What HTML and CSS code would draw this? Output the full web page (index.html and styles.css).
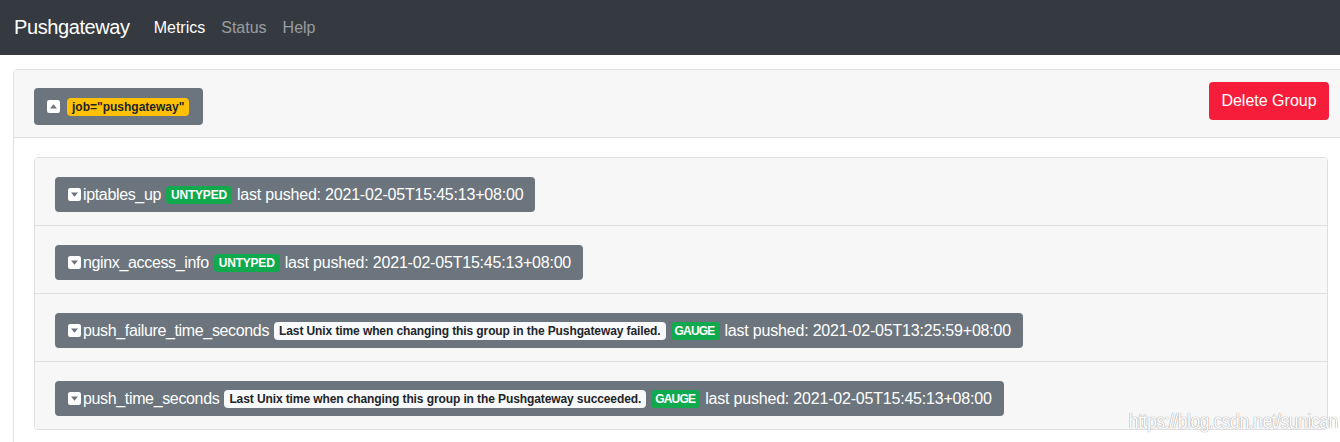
FILE: index.html
```html
<!DOCTYPE html>
<html lang="en">
<head>
<meta charset="utf-8">
<title>Pushgateway</title>
<link rel="stylesheet" href="styles.css">
</head>
<body>
<div class="page">
  <nav class="navbar">
    <span class="brand">Pushgateway</span>
    <a class="nav-link active">Metrics</a>
    <a class="nav-link">Status</a>
    <a class="nav-link">Help</a>
  </nav>

  <div class="group">
    <div class="group-header">
      <div class="group-badge">
        <svg class="icon" viewBox="0 0 13 13" width="13" height="13"><path fill="#fff" fill-rule="evenodd" d="M2.2 0h8.6A2.2 2.2 0 0 1 13 2.2v8.6A2.2 2.2 0 0 1 10.8 13H2.2A2.2 2.2 0 0 1 0 10.8V2.2A2.2 2.2 0 0 1 2.2 0zM3 8.6h7L6.5 4.2z"/></svg>
        <span class="badge badge-warning">job="pushgateway"</span>
      </div>
      <button class="btn-danger">Delete Group</button>
    </div>
    <div class="group-body">
      <div class="metrics">
        <div class="metric-row">
          <div class="bar">
            <svg class="icon" viewBox="0 0 13 13" width="13" height="13"><path fill="#fff" fill-rule="evenodd" d="M2.2 0h8.6A2.2 2.2 0 0 1 13 2.2v8.6A2.2 2.2 0 0 1 10.8 13H2.2A2.2 2.2 0 0 1 0 10.8V2.2A2.2 2.2 0 0 1 2.2 0zM3 4.4h7L6.5 8.8z"/></svg>
            <span class="name">iptables_up</span>
            <span class="badge badge-success">UNTYPED</span>
            <span class="pushed">last pushed: 2021-02-05T15:45:13+08:00</span>
          </div>
        </div>
        <div class="metric-row">
          <div class="bar">
            <svg class="icon" viewBox="0 0 13 13" width="13" height="13"><path fill="#fff" fill-rule="evenodd" d="M2.2 0h8.6A2.2 2.2 0 0 1 13 2.2v8.6A2.2 2.2 0 0 1 10.8 13H2.2A2.2 2.2 0 0 1 0 10.8V2.2A2.2 2.2 0 0 1 2.2 0zM3 4.4h7L6.5 8.8z"/></svg>
            <span class="name">nginx_access_info</span>
            <span class="badge badge-success">UNTYPED</span>
            <span class="pushed">last pushed: 2021-02-05T15:45:13+08:00</span>
          </div>
        </div>
        <div class="metric-row">
          <div class="bar">
            <svg class="icon" viewBox="0 0 13 13" width="13" height="13"><path fill="#fff" fill-rule="evenodd" d="M2.2 0h8.6A2.2 2.2 0 0 1 13 2.2v8.6A2.2 2.2 0 0 1 10.8 13H2.2A2.2 2.2 0 0 1 0 10.8V2.2A2.2 2.2 0 0 1 2.2 0zM3 4.4h7L6.5 8.8z"/></svg>
            <span class="name">push_failure_time_seconds</span>
            <span class="badge badge-light">Last Unix time when changing this group in the Pushgateway failed.</span>
            <span class="badge badge-success gauge">GAUGE</span>
            <span class="pushed">last pushed: 2021-02-05T13:25:59+08:00</span>
          </div>
        </div>
        <div class="metric-row">
          <div class="bar">
            <svg class="icon" viewBox="0 0 13 13" width="13" height="13"><path fill="#fff" fill-rule="evenodd" d="M2.2 0h8.6A2.2 2.2 0 0 1 13 2.2v8.6A2.2 2.2 0 0 1 10.8 13H2.2A2.2 2.2 0 0 1 0 10.8V2.2A2.2 2.2 0 0 1 2.2 0zM3 4.4h7L6.5 8.8z"/></svg>
            <span class="name">push_time_seconds</span>
            <span class="badge badge-light">Last Unix time when changing this group in the Pushgateway succeeded.</span>
            <span class="badge badge-success gauge">GAUGE</span>
            <span class="pushed">last pushed: 2021-02-05T15:45:13+08:00</span>
          </div>
        </div>
      </div>
    </div>
  </div>

  <div class="watermark">https://blog.csdn.net/sunican</div>
</div>
</body>
</html>
```

FILE: styles.css
```css
html, body {
  margin: 0;
  padding: 0;
  overflow: hidden;
  background: #fff;
  font-family: "Liberation Sans", Arial, sans-serif;
  color: #212529;
}

.page {
  position: relative;
  height: 442px;
  overflow: hidden;
}

.navbar {
  height: 55px;
  background: #343a40;
  display: flex;
  align-items: center;
  padding: 0 14px;
  box-sizing: border-box;
}

.brand {
  color: #fff;
  font-size: 20px;
  letter-spacing: -0.4px;
  margin-right: 16px;
}

.nav-link {
  color: rgba(255, 255, 255, 0.5);
  font-size: 16px;
  padding: 0 8px;
}

.nav-link.active {
  color: #fff;
}

.group {
  margin: 14px 0 0 13px;
  width: 1336px;
  box-sizing: border-box;
  border: 1px solid #dfdfdf;
  border-radius: 4px;
}

.group-header {
  background: #f7f7f7;
  border-bottom: 1px solid #dfdfdf;
  padding: 12px 19px 12px 20px;
  display: flex;
  justify-content: space-between;
  align-items: flex-start;
}

.group-badge {
  margin-top: 6px;
  height: 37px;
  box-sizing: border-box;
  background: #6c757d;
  border-radius: 4px;
  display: flex;
  align-items: center;
  gap: 7px;
  padding: 0 14px 0 13px;
}

.btn-danger {
  background: #f51d3a;
  color: #fff;
  border: none;
  border-radius: 4px;
  font-family: "Liberation Sans", Arial, sans-serif;
  font-size: 16px;
  height: 38px;
  padding: 0 12px;
  width: 120px;
}

.group-body {
  padding: 19px 20px 20px 20px;
}

.metrics {
  border: 1px solid #dfdfdf;
  border-radius: 4px;
  overflow: hidden;
}

.metric-row {
  background: #f7f7f7;
  border-bottom: 1px solid #dfdfdf;
  padding: 19px 20px 13px;
}

.metric-row:last-child {
  border-bottom: none;
}

.bar {
  display: inline-flex;
  align-items: center;
  gap: 5px;
  height: 35px;
  box-sizing: border-box;
  background: #6c757d;
  color: #fff;
  border-radius: 4px;
  padding: 0 12px 0 13px;
  font-size: 16px;
}

.icon {
  display: block;
  flex: none;
}

.bar .icon {
  margin-right: -3px;
}

.name {
  letter-spacing: -0.35px;
}

.pushed {
  letter-spacing: -0.2px;
}

.badge {
  display: inline-block;
  font-size: 12px;
  font-weight: bold;
  line-height: 12px;
  padding: 3px 5px;
  border-radius: 4px;
  white-space: nowrap;
}

.badge-success {
  background: #10a94e;
  color: #fff;
  letter-spacing: -0.2px;
}

.badge-success.gauge {
  letter-spacing: -0.8px;
  padding: 3px 5px 3px 4px;
}

.badge-warning {
  background: #ffc107;
  color: #212529;
}

.badge-light {
  background: #f8f9fa;
  color: #212529;
  letter-spacing: -0.1px;
}

.watermark {
  position: absolute;
  right: 2px;
  top: 409px;
  font-size: 21px;
  color: #fff;
  letter-spacing: -0.6px;
  transform: scaleX(0.84);
  transform-origin: right center;
  text-shadow: 0 0 1px #9a9a9a, 0 0 1px #9a9a9a;
}
```
